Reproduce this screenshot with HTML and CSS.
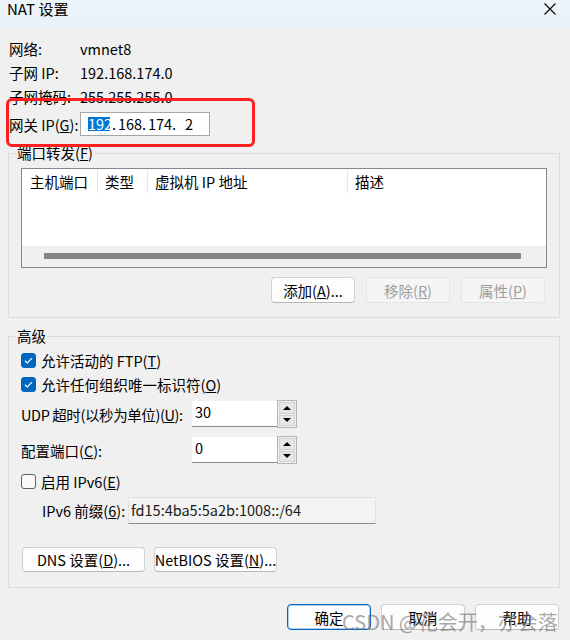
FILE: index.html
```html
<!DOCTYPE html>
<html lang="zh-CN">
<head>
<meta charset="utf-8">
<title>NAT 设置</title>
<link rel="stylesheet" href="styles.css">
</head>
<body>
<div class="window">
  <div class="titlebar">
    <span class="title">NAT 设置</span>
    <svg class="close" width="12" height="12" viewBox="0 0 12 12"><path d="M0.5 0.5 L11.5 11.5 M11.5 0.5 L0.5 11.5" stroke="#000" stroke-width="1.1" fill="none"/></svg>
  </div>
  <div class="content">
    <div class="info">
      <div class="row"><span class="lbl">网络:</span><span>vmnet8</span></div>
      <div class="row"><span class="lbl">子网 IP:</span><span>192.168.174.0</span></div>
      <div class="row"><span class="lbl">子网掩码:</span><span>255.255.255.0</span></div>
      <div class="row gw"><span class="lbl">网关 IP(<u>G</u>):</span>
        <div class="ipbox">
          <span class="seg"><span class="sel">192</span></span><span class="dot">.</span><span class="seg">168</span><span class="dot">.</span><span class="seg">174</span><span class="dot">.</span><span class="seg">2</span>
        </div>
      </div>
    </div>

    <fieldset class="group g1">
      <legend>端口转发(<u>F</u>)</legend>
      <div class="list">
        <div class="lhead">
          <div class="col c1">主机端口</div>
          <div class="col c2">类型</div>
          <div class="col c3">虚拟机 IP 地址</div>
          <div class="col c4">描述</div>
        </div>
        <div class="lbody"></div>
        <div class="hscroll"><div class="thumb"></div></div>
      </div>
      <div class="btnrow">
        <div class="btn">添加(<u>A</u>)...</div>
        <div class="btn disabled">移除(<u>R</u>)</div>
        <div class="btn disabled">属性(<u>P</u>)</div>
      </div>
    </fieldset>

    <fieldset class="group g2">
      <legend>高级</legend>
      <div class="cbrow first"><span class="cb checked"><svg width="15" height="15" viewBox="0 0 15 15"><path d="M4 7.8 L6.4 10 L11 5.2" stroke="#fff" stroke-width="1.2" fill="none"/></svg></span><span>允许活动的 FTP(<u>T</u>)</span></div>
      <div class="cbrow"><span class="cb checked"><svg width="15" height="15" viewBox="0 0 15 15"><path d="M4 7.8 L6.4 10 L11 5.2" stroke="#fff" stroke-width="1.2" fill="none"/></svg></span><span>允许任何组织唯一标识符(<u>O</u>)</span></div>
      <div class="frow udp">
        <span class="flbl tight">UDP 超时(以秒为单位)(<u>U</u>):</span>
        <div class="spin">
          <div class="sfield">30</div>
          <div class="sbtns"><div class="sbtn"><span class="up"></span></div><div class="sbtn"><span class="down"></span></div></div>
        </div>
      </div>
      <div class="frow port">
        <span class="flbl">配置端口(<u>C</u>):</span>
        <div class="spin">
          <div class="sfield">0</div>
          <div class="sbtns"><div class="sbtn"><span class="up"></span></div><div class="sbtn"><span class="down"></span></div></div>
        </div>
      </div>
      <div class="cbrow v6"><span class="cb"></span><span>启用 IPv6(<u>E</u>)</span></div>
      <div class="frow v6pre">
        <span class="v6lbl">IPv6 前缀(<u>6</u>):</span>
        <div class="v6field">fd15:4ba5:5a2b:1008::/64</div>
      </div>
      <div class="btnrow2">
        <div class="btn wide">DNS 设置(<u>D</u>)...</div>
        <div class="btn wide">NetBIOS 设置(<u>N</u>)...</div>
      </div>
    </fieldset>

    <div class="footer">
      <div class="btn default">确定</div>
      <div class="btn">取消</div>
      <div class="btn">帮助</div>
    </div>
  </div>
  <div class="redbox"></div>
  <div class="watermark">CSDN @花会开，亦会落</div>
</div>
</body>
</html>
```

FILE: styles.css
```css
* { box-sizing: border-box; }
html, body { margin: 0; padding: 0; }
body {
  background: #f0f0f0;
  font-family: "Noto Sans CJK SC", "Noto Sans", sans-serif;
  font-size: 14.5px;
  color: #000;
}
.window {
  position: relative;
  width: 570px;
  height: 640px;
  overflow: hidden;
  background: #f0f0f0;
}
.titlebar {
  height: 27px;
  background: linear-gradient(#edf4fa, #e9f2f8);
  display: flex;
  justify-content: space-between;
  align-items: flex-start;
  padding: 0 14px 0 7px;
}
.title {
  font-size: 15px;
  line-height: 18px;
}
.close { margin-top: 3px; }
.content { padding-top: 9px; }
.info { padding-left: 9px; }
.row {
  display: flex;
  align-items: center;
  height: 24px;
}
.lbl { width: 71px; flex-shrink: 0; white-space: nowrap; }
.row.gw { margin-top: 4px; }
.ipbox {
  width: 130px;
  height: 24px;
  background: #fff;
  border: 1px solid #a6a6a6;
  display: flex;
  align-items: center;
  padding-left: 7px;
}
.seg { width: 22px; text-align: center; line-height: 14px; }
.dot { width: 8px; text-align: center; line-height: 14px; }
.sel { background: #0078d7; color: #fff; display: inline-block; width: 22px; }

.group {
  margin: 0 0 0 8px;
  width: 552px;
  min-inline-size: 0;
  border: 1px solid #dcdcdc;
  padding: 0 12px;
}
.group legend {
  padding: 0 1px;
  margin-left: -5px;
  line-height: 18px;
}
.g1 { margin-top: 8px; padding-top: 6px; padding-bottom: 14px; }
.list {
  border: 1px solid #828790;
  background: #fff;
  height: 100px;
  display: flex;
  flex-direction: column;
}
.lhead { display: flex; height: 26px; flex-shrink: 0; }
.col {
  line-height: 26px;
  padding-left: 7px;
  position: relative;
  white-space: nowrap;
}
.col::after {
  content: "";
  position: absolute;
  right: 0;
  top: 1px;
  bottom: 2px;
  width: 1px;
  background: #e5e5e5;
}
.c1 { width: 76px; padding-left: 8px; }
.c2 { width: 50px; }
.c3 { width: 200px; }
.c4 { flex: 1; }
.c4::after { display: none; }
.lbody { flex: 1; }
.hscroll {
  height: 21px;
  background: #f0f0f0;
  padding: 7px 0 0 22px;
  flex-shrink: 0;
}
.thumb { width: 477px; height: 6px; background: #858585; }
.btnrow {
  display: flex;
  justify-content: flex-end;
  gap: 11px;
  margin-top: 9px;
  padding-right: 2px;
}
.btn {
  width: 84px;
  height: 26px;
  border: 1px solid #d0d0d0;
  border-bottom-color: #b8b8b8;
  border-radius: 4px;
  background: #fdfdfd;
  display: flex;
  align-items: center;
  justify-content: center;
  white-space: nowrap;
}
.btn.disabled {
  background: #f5f5f5;
  border-color: #e5e5e5;
  color: #9d9d9d;
}
.btn.default {
  border-color: #0067c0;
  box-shadow: inset 0 0 0 1px rgba(0, 103, 192, 0.3);
}
.btn.wide { width: 123px; height: 25px; }

.g2 { margin-top: 9px; padding-top: 3px; padding-bottom: 15px; }
.cbrow {
  display: flex;
  align-items: center;
  height: 24px;
  gap: 5px;
}
.cb {
  width: 15px;
  height: 15px;
  border-radius: 3px;
  border: 1px solid #5f5f5f;
  background: #f9f9f9;
  flex-shrink: 0;
  display: flex;
}
.cb svg { display: block; }
.cb.checked { background: #0067c0; border-color: #0067c0; }
.cb.checked svg { margin: -1px; }
.frow { display: flex; align-items: center; }
.flbl { width: 171px; flex-shrink: 0; white-space: nowrap; }
.flbl.tight { letter-spacing: -0.4px; }
.udp { margin-top: 4px; }
.port { margin-top: 8px; }
.spin { display: flex; align-items: center; }
.sfield {
  width: 85px;
  height: 26px;
  background: #fff;
  border-bottom: 1px solid #8a8a8a;
  padding: 1px 0 0 3px;
  line-height: 20px;
}
.sbtns {
  width: 20px;
  height: 28px;
  border: 1px solid #b4b4b4;
  padding: 1px;
  display: flex;
  flex-direction: column;
  gap: 1px;
  background: #f0f0f0;
}
.sbtn {
  flex: 1;
  background: #e6e6e6;
  border: 1px solid #d2d2d2;
  display: flex;
  align-items: center;
  justify-content: center;
}
.up {
  width: 0; height: 0;
  border-left: 4px solid transparent;
  border-right: 4px solid transparent;
  border-bottom: 4px solid #000;
}
.down {
  width: 0; height: 0;
  border-left: 4px solid transparent;
  border-right: 4px solid transparent;
  border-top: 4px solid #000;
}
.cbrow.v6 { margin-top: 5px; }
.v6pre { margin-top: 4px; padding-left: 21px; }
.v6lbl { width: 86px; flex-shrink: 0; white-space: nowrap; }
.v6field {
  width: 248px;
  height: 27px;
  background: #f3f3f3;
  border: 1px solid #e2e2e2;
  border-bottom-color: #8a8a8a;
  padding-left: 2px;
  line-height: 24px;
  color: #1a1a1a;
}
.btnrow2 {
  display: flex;
  gap: 9px;
  margin-top: 23px;
  padding-left: 1px;
}
.footer {
  display: flex;
  justify-content: flex-end;
  gap: 10px;
  margin-top: 16px;
  padding-right: 11px;
}
.redbox {
  position: absolute;
  left: 6px;
  top: 98px;
  width: 249px;
  height: 49px;
  border: 3.5px solid #ff1f1f;
  border-radius: 6px;
}
.watermark {
  position: absolute;
  left: 342px;
  top: 608px;
  font-size: 20px;
  line-height: 28px;
  color: rgba(110, 110, 110, 0.6);
  white-space: nowrap;
}
```
